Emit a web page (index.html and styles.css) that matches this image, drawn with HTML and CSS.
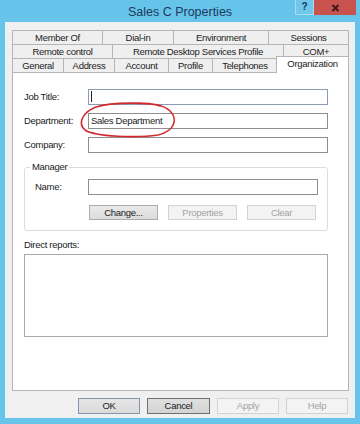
FILE: index.html
```html
<!DOCTYPE html>
<html>
<head>
<meta charset="utf-8">
<link rel="stylesheet" href="styles.css">
</head>
<body>
<div class="window">
  <div class="titlebar">
    <div class="tb-side"></div>
    <div class="title">Sales C Properties</div>
    <div class="tb-side tb-right">
      <div class="tb-help">?</div>
      <div class="tb-close">
        <svg width="9" height="8" viewBox="0 0 9 8"><path d="M1.5 1 L7.5 7 M7.5 1 L1.5 7" stroke="#3a1a1a" stroke-width="1.8" fill="none"/></svg>
      </div>
    </div>
  </div>
  <div class="client">
    <div class="tabs">
      <div class="tabrow">
        <div class="tab w90">Member Of</div>
        <div class="tab w71">Dial-in</div>
        <div class="tab w95">Environment</div>
        <div class="tab w81">Sessions</div>
      </div>
      <div class="tabrow">
        <div class="tab w100">Remote control</div>
        <div class="tab w171">Remote Desktop Services Profile</div>
        <div class="tab w66">COM+</div>
      </div>
      <div class="tabrow last">
        <div class="tab w51">General</div>
        <div class="tab w51">Address</div>
        <div class="tab w54">Account</div>
        <div class="tab w44">Profile</div>
        <div class="tab w65">Telephones</div>
        <div class="tab w72 active">Organization</div>
      </div>
    </div>
    <div class="panel">
      <div class="form">
        <div class="lbl">Job Title:</div>
        <div class="field focus"><span class="caret"></span></div>
        <div class="lbl">Department:</div>
        <div class="field">Sales Department</div>
        <div class="lbl">Company:</div>
        <div class="field"></div>
      </div>
      <fieldset class="group">
        <legend>Manager</legend>
        <div class="name-row">
          <div class="lbl name-lbl">Name:</div>
          <div class="field"></div>
        </div>
        <div class="group-btns">
          <div class="btn">Change...</div>
          <div class="btn disabled">Properties</div>
          <div class="btn disabled">Clear</div>
        </div>
      </fieldset>
      <div class="lbl reports-lbl">Direct reports:</div>
      <div class="listbox"></div>
    </div>
    <div class="dlg-btns">
      <div class="btn dlg ok">OK</div>
      <div class="btn dlg cancel">Cancel</div>
      <div class="btn dlg disabled">Apply</div>
      <div class="btn dlg disabled">Help</div>
    </div>
  </div>
</div>
<svg class="annot" width="360" height="424" viewBox="0 0 360 424">
  <path d="M160 106 C150 102 112 102 96 107 C83 112 77 123 85 130 C95 137 138 138 158 135 C175 131 178 119 170 111 C164 105 152 103 138 103" stroke="#d22a2e" stroke-width="1.6" fill="none" stroke-linecap="round"/>
</svg>
</body>
</html>
```
FILE: styles.css
```css
* { box-sizing: border-box; }
html, body { margin: 0; padding: 0; }
body {
  width: 360px;
  height: 424px;
  background: #66c4eb;
  font-family: "Liberation Sans", Arial, sans-serif;
  font-size: 9.5px;
  letter-spacing: -0.3px;
  color: #1b1b1b;
  position: relative;
  overflow: hidden;
}
.window {
  display: flex;
  flex-direction: column;
  height: 424px;
}
.titlebar {
  height: 22px;
  display: grid;
  grid-template-columns: 1fr auto 1fr;
  padding: 0 4px;
}
.title {
  font-size: 12.5px;
  letter-spacing: 0;
  color: #1d3a5c;
  line-height: 22px;
  padding-top: 1px;
}
.tb-right {
  display: flex;
  justify-content: flex-end;
  align-items: flex-start;
}
.tb-help {
  width: 19px;
  height: 15px;
  border: 1px solid #a8dcf2;
  border-top: none;
  background: #6fc8ec;
  color: #15325a;
  font-weight: bold;
  font-size: 10px;
  text-align: center;
  line-height: 14px;
  letter-spacing: 0;
}
.tb-close {
  width: 42px;
  height: 15px;
  background: #c8524e;
  display: flex;
  align-items: center;
  justify-content: center;
}
.client {
  margin: 0 5px 0 5px;
  height: 396px;
  background: #f0f0f0;
  padding: 8px 6px 0 7px;
  display: flex;
  flex-direction: column;
}
.tabrow {
  display: flex;
  height: 14px;
}
.tabrow.last { align-items: flex-end; }
.tab {
  height: 14px;
  border-top: 1px solid #b5b5b5;
  border-left: 1px solid #b5b5b5;
  background: #efefef;
  text-align: center;
  line-height: 13px;
  white-space: nowrap;
  overflow: hidden;
}
.tab:last-child { border-right: 1px solid #b5b5b5; }
.tab.active {
  height: 17px;
  margin-top: -2px;
  margin-bottom: -1px;
  margin-left: -1px;
  background: #ffffff;
  position: relative;
  z-index: 1;
  line-height: 14px;
}
.w44 { width: 44px; }
.w51 { width: 51px; }
.w54 { width: 54px; }
.w65 { width: 65px; }
.w66 { width: 66px; }
.w71 { width: 71px; }
.w72 { width: 73px; }
.w81 { width: 81px; }
.w90 { width: 90px; }
.w95 { width: 95px; }
.w100 { width: 100px; }
.w171 { width: 171px; }
.panel {
  flex: 1;
  background: #ffffff;
  border: 1px solid #b5b5b5;
  padding: 16px 20px 0 11px;
  display: flex;
  flex-direction: column;
}
.form {
  display: grid;
  grid-template-columns: 64px 1fr;
  grid-auto-rows: 16px;
  row-gap: 8px;
  align-items: center;
}
.lbl {
  line-height: 12px;
  white-space: nowrap;
}
.field {
  height: 16px;
  border: 1px solid #8e8e8e;
  background: #fff;
  padding: 0 2px;
  line-height: 14px;
  position: relative;
}
.field.focus { border-color: #8a9cb2; }
.caret {
  display: block;
  width: 1px;
  height: 11px;
  margin-top: 1px;
  background: #222;
}
.group {
  margin: 8px 0 0 0;
  padding: 6px 9px 10px 10px;
  border: 1px solid #dcdcdc;
  border-radius: 3px;
  min-width: 0;
}
.group legend {
  padding: 0 2px;
  margin-left: -5px;
  line-height: 12px;
}
.name-row {
  display: grid;
  grid-template-columns: 53px 1fr;
  align-items: center;
}
.group-btns {
  display: flex;
  gap: 10px;
  margin-top: 10px;
  padding-left: 54px;
}
.btn {
  width: 69px;
  height: 15px;
  border: 1px solid #acacac;
  background: linear-gradient(#e9e9e9, #dcdcdc);
  text-align: center;
  line-height: 13px;
  color: #1b1b1b;
}
.btn.disabled {
  background: #f3f3f3;
  border-color: #d2d2d2;
  color: #a3a3a3;
}
.reports-lbl { margin-top: 8px; }
.listbox {
  margin-top: 3px;
  height: 83px;
  border: 1px solid #a9a9a9;
  background: #fff;
}
.dlg-btns {
  display: flex;
  justify-content: flex-end;
  gap: 7px;
  padding: 7px 1px 4px 0;
}
.btn.dlg {
  width: 62px;
  height: 16px;
  line-height: 14px;
}
.btn.ok {
  border-color: #8397b0;
  background: linear-gradient(#e6e6e6, #dadada);
}
.btn.cancel {
  width: 63px;
  border-color: #6f6f6f;
  background: linear-gradient(#e0e0e0, #d3d3d3);
}
.annot {
  position: absolute;
  left: 0;
  top: 0;
  pointer-events: none;
}
```
